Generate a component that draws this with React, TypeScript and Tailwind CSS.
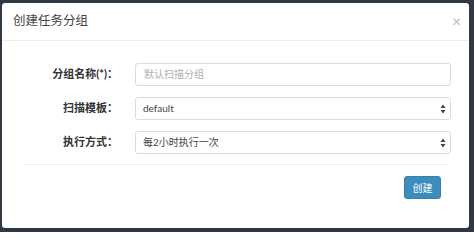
function SelectArrows() {
  return (
    <svg width="6" height="10" viewBox="0 0 6 10" className="shrink-0">
      <path d="M3 0.5 L5.5 4 H0.5 Z" fill="#444" />
      <path d="M3 9.5 L5.5 6 H0.5 Z" fill="#444" />
    </svg>
  );
}

const font = { fontFamily: 'Lato, "Noto Sans CJK SC", sans-serif' };

function Row({ label, children }: { label: string; children: React.ReactNode }) {
  return (
    <div className="flex items-center h-[23px]">
      <label className="w-[118px] pr-[2px] text-right text-[11px] font-bold text-[#333]">{label}</label>
      <div className="ml-[15px] w-[316px]">{children}</div>
    </div>
  );
}

export default function App() {
  return (
    <div className="w-[474px] h-[232px] bg-[#2e3944] pl-[2px] pt-[3px]" style={font}>
      <div className="w-[467px] h-[225px] bg-white rounded-[3px] flex flex-col">
        <div className="h-[38px] border-b border-[#eceff1] flex items-center justify-between pl-[11px] pr-[8px]">
          <h4 className="text-[12.5px] text-[#444] leading-none">创建任务分组</h4>
          <span className="text-[15px] font-bold text-[#c8c8c8] leading-none">×</span>
        </div>
        <div className="pt-[22px] flex flex-col gap-[11px]">
          <Row label="分组名称(*)：">
            <div className="h-[23px] border border-[#d9dde0] rounded-[3px] flex items-center px-[8px] text-[10px] text-[#b0b0b0]">
              默认扫描分组
            </div>
          </Row>
          <Row label="扫描模板：">
            <div className="h-[23px] border border-[#d9dde0] rounded-[3px] flex items-center justify-between pl-[7px] pr-[4px] text-[10px] text-[#444]">
              <span>default</span>
              <SelectArrows />
            </div>
          </Row>
          <Row label="执行方式：">
            <div className="h-[23px] border border-[#d9dde0] rounded-[3px] flex items-center justify-between pl-[7px] pr-[4px] text-[10px] text-[#444]">
              <span>每2小时执行一次</span>
              <SelectArrows />
            </div>
          </Row>
        </div>
        <div className="mt-[10px] ml-[22px] w-[426px] border-t border-[#f0f2f3]" />
        <div className="flex justify-end pr-[28px] pt-[11px]">
          <button className="h-[23px] w-[37px] rounded-[3px] bg-[#3c8dbc] border border-[#367fa9] text-white text-[10px] leading-none">
            创建
          </button>
        </div>
      </div>
    </div>
  );
}
